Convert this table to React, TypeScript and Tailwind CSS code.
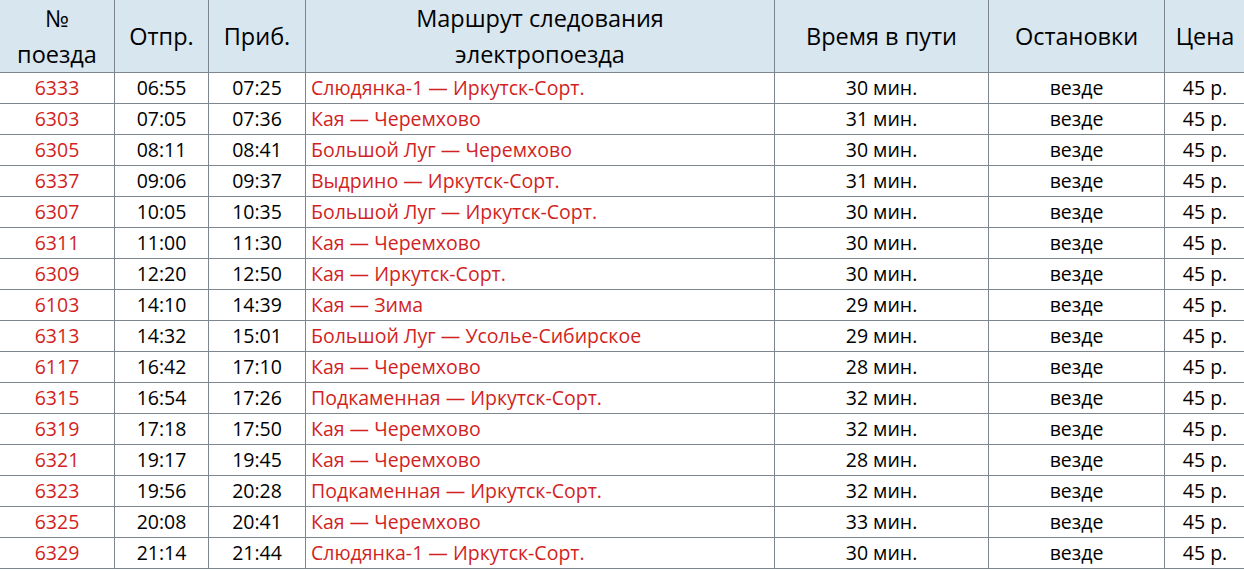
const rows: [string, string, string, string, string][] = [
  ["6333", "06:55", "07:25", "Слюдянка-1 — Иркутск-Сорт.", "30 мин."],
  ["6303", "07:05", "07:36", "Кая — Черемхово", "31 мин."],
  ["6305", "08:11", "08:41", "Большой Луг — Черемхово", "30 мин."],
  ["6337", "09:06", "09:37", "Выдрино — Иркутск-Сорт.", "31 мин."],
  ["6307", "10:05", "10:35", "Большой Луг — Иркутск-Сорт.", "30 мин."],
  ["6311", "11:00", "11:30", "Кая — Черемхово", "30 мин."],
  ["6309", "12:20", "12:50", "Кая — Иркутск-Сорт.", "30 мин."],
  ["6103", "14:10", "14:39", "Кая — Зима", "29 мин."],
  ["6313", "14:32", "15:01", "Большой Луг — Усолье-Сибирское", "29 мин."],
  ["6117", "16:42", "17:10", "Кая — Черемхово", "28 мин."],
  ["6315", "16:54", "17:26", "Подкаменная — Иркутск-Сорт.", "32 мин."],
  ["6319", "17:18", "17:50", "Кая — Черемхово", "32 мин."],
  ["6321", "19:17", "19:45", "Кая — Черемхово", "28 мин."],
  ["6323", "19:56", "20:28", "Подкаменная — Иркутск-Сорт.", "32 мин."],
  ["6325", "20:08", "20:41", "Кая — Черемхово", "33 мин."],
  ["6329", "21:14", "21:44", "Слюдянка-1 — Иркутск-Сорт.", "30 мин."],
];

const th = "border border-[#7d868e] border-t-0 font-normal text-center align-middle p-0";
const td = "border border-[#7d868e] h-[31px] p-0 align-middle";

export default function App() {
  return (
    <div className="bg-white w-[1244px] h-[571px] overflow-hidden font-['Open_Sans',sans-serif] text-black">
      <table className="border-collapse table-fixed w-[1246px] -ml-px">
        <colgroup>
          <col className="w-[115px]" />
          <col className="w-[94px]" />
          <col className="w-[97px]" />
          <col className="w-[469px]" />
          <col className="w-[214px]" />
          <col className="w-[176px]" />
          <col className="w-[81px]" />
        </colgroup>
        <thead>
          <tr className="bg-[#d8e6ef] text-[23.5px] leading-[36px] h-[72px]">
            <th className={th}>
              №<br />поезда
            </th>
            <th className={th}>Отпр.</th>
            <th className={th}>Приб.</th>
            <th className={th}>
              Маршрут следования
              <br />
              электропоезда
            </th>
            <th className={th}>Время в пути</th>
            <th className={th}>Остановки</th>
            <th className={th}>Цена</th>
          </tr>
        </thead>
        <tbody className="text-[19.5px] leading-[30px]">
          {rows.map((r) => (
            <tr key={r[0] + r[1]}>
              <td className={`${td} text-center text-[#d21f1f]`}>{r[0]}</td>
              <td className={`${td} text-center`}>{r[1]}</td>
              <td className={`${td} text-center`}>{r[2]}</td>
              <td className={`${td} pl-[5px] text-[#d21f1f]`}>{r[3]}</td>
              <td className={`${td} text-center`}>{r[4]}</td>
              <td className={`${td} text-center`}>везде</td>
              <td className={`${td} text-center`}>45 р.</td>
            </tr>
          ))}
        </tbody>
      </table>
    </div>
  );
}
